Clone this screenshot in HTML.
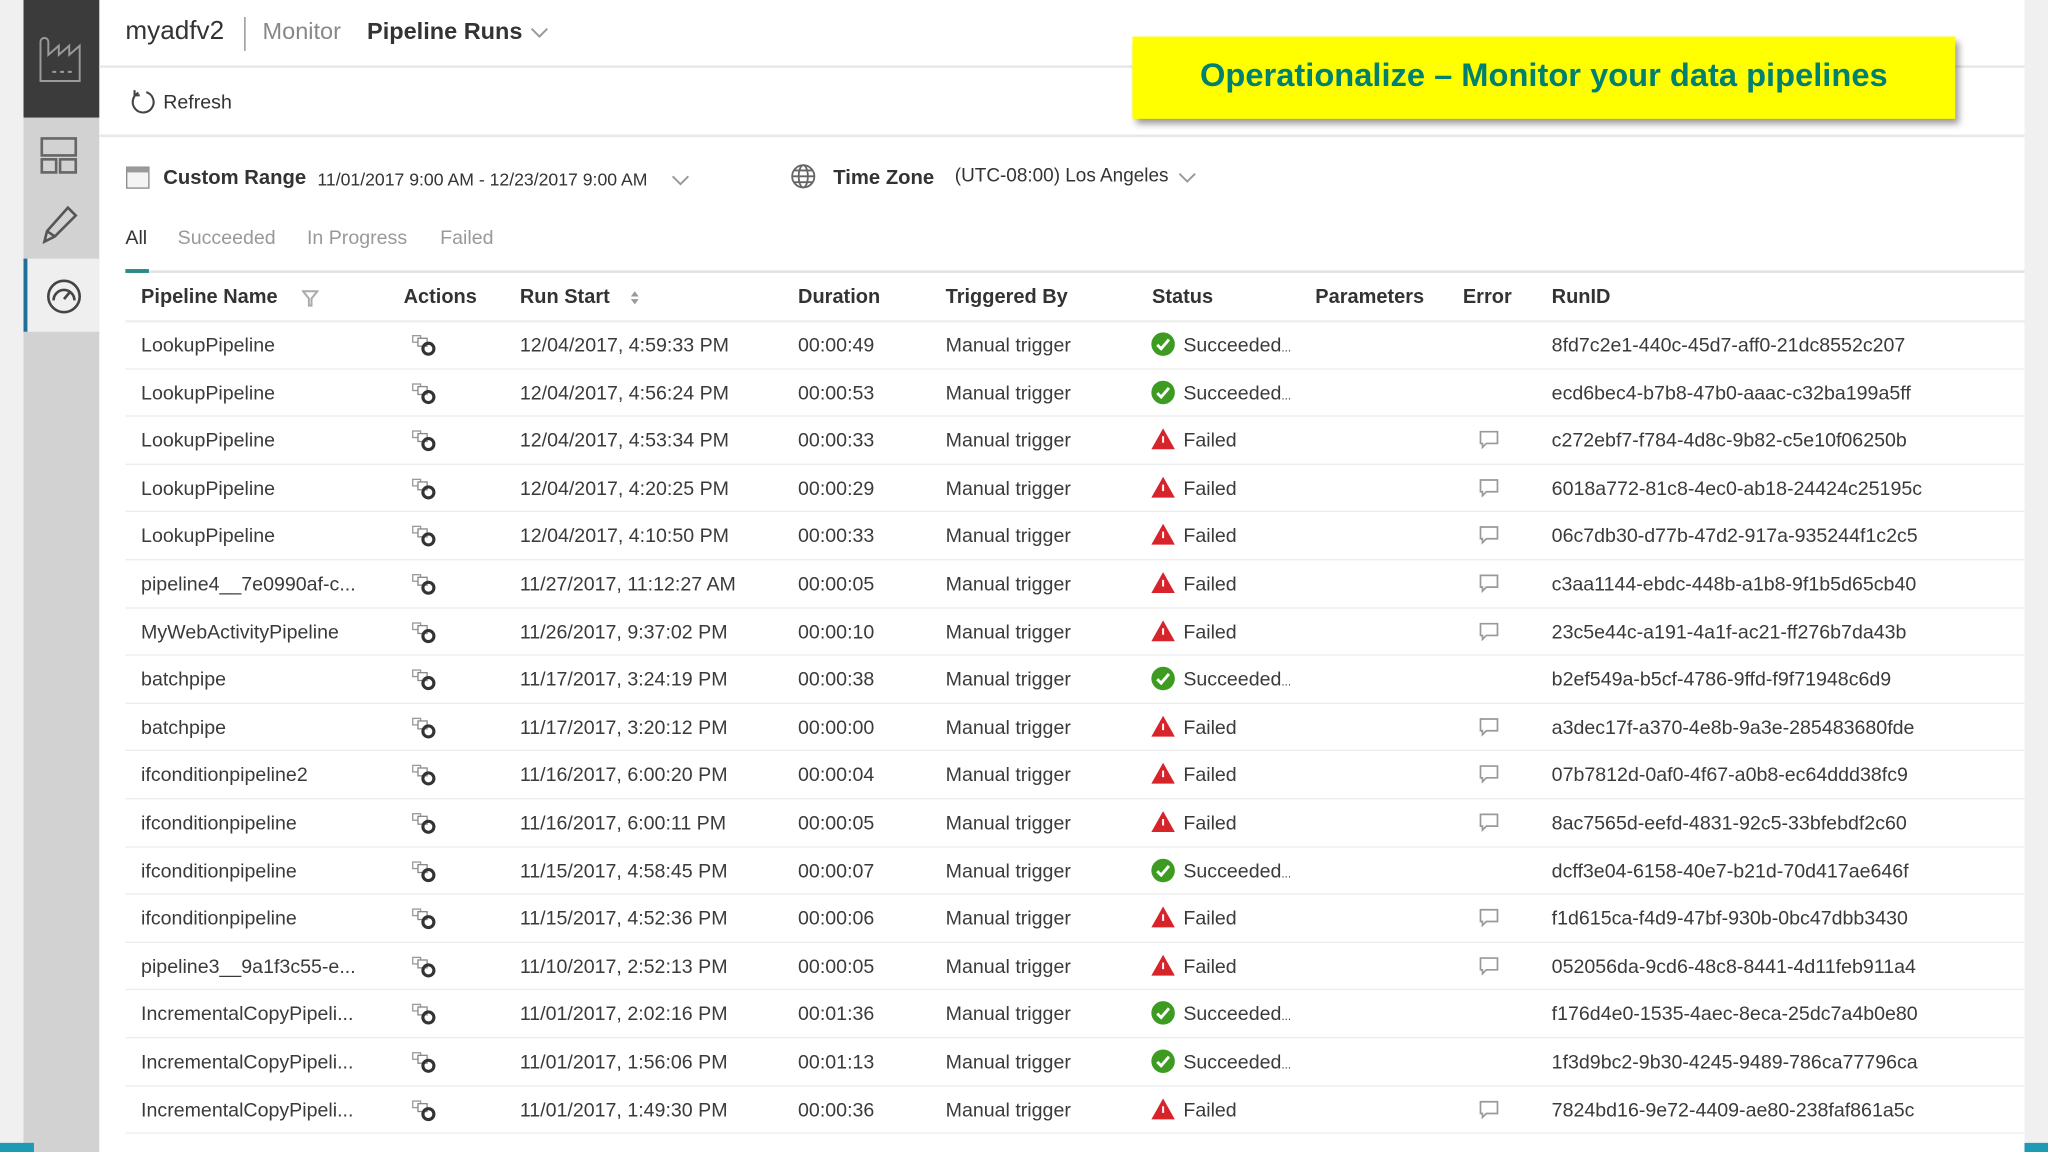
<!DOCTYPE html>
<html><head><meta charset="utf-8"><style>
*{margin:0;padding:0;box-sizing:border-box}
html,body{width:2048px;height:1152px;overflow:hidden;background:#fff}
#w{position:absolute;left:0;top:0;width:1568px;height:882px;transform:scale(1.306122);transform-origin:0 0;font-family:"Liberation Sans",sans-serif;color:#333;background:#fff}
.a{position:absolute;white-space:nowrap}
.row{position:absolute;left:96px;width:1454px;height:36.6px;border-bottom:1px solid #ececec}
.c{position:absolute;top:1px;line-height:36px;font-size:15px;color:#3a3a3a}
.hd{font-size:15.3px;font-weight:bold;color:#333}
</style></head><body><div id="w">
<div class="a" style="left:0;top:0;width:18px;height:882px;background:#f0f0f0"></div>
<div class="a" style="left:1550px;top:0;width:18px;height:882px;background:#f0f0f0"></div>
<div class="a" style="left:18px;top:0;width:58px;height:882px;background:#d2d2d2"></div>
<div class="a" style="left:18px;top:0;width:58px;height:90px;background:#3b3b3b"></div>
<div class="a" style="left:18px;top:198px;width:58px;height:56px;background:#efefef;border-left:3px solid #1f6f9a"></div>
<div class="a" style="left:0;top:875px;width:26px;height:7px;background:#1e9bb3"></div>
<div class="a" style="left:1550px;top:875px;width:18px;height:7px;background:#1e9bb3"></div>
<svg class="a" style="left:28px;top:26px" width="38" height="38" viewBox="0 0 38 38" fill="none" stroke="#9a9a9a" stroke-width="1.5"><path d="M3 36V6a3 3 0 0 1 6 0v10l8-7v7l8-7v7l8-7v27z"/><path d="M12 29h3M18 29h3M24 29h3"/></svg>
<svg class="a" style="left:30px;top:104px" width="30" height="30" viewBox="0 0 30 30" fill="none" stroke="#666" stroke-width="2"><rect x="2" y="2" width="26" height="13"/><rect x="2" y="18" width="11" height="10"/><rect x="16" y="18" width="12" height="10"/></svg>
<svg class="a" style="left:30px;top:155px" width="30" height="32" viewBox="0 0 30 32" fill="none" stroke="#555" stroke-width="2"><path d="M4 30l2-8L22 4l6 6L12 26z"/><path d="M6 22l6 4"/></svg>
<svg class="a" style="left:34px;top:212px" width="30" height="30" viewBox="0 0 30 30" fill="none" stroke="#444" stroke-width="2"><circle cx="15" cy="15" r="12"/><path d="M7 18a8 8 0 1 1 16 0"/><path d="M15 17l5-6"/></svg>
<div class="a" style="left:96px;top:13px;font-size:20px;color:#333">myadfv2</div>
<div class="a" style="left:187px;top:13px;width:1px;height:26px;background:#888"></div>
<div class="a" style="left:201px;top:14px;font-size:18px;color:#888">Monitor</div>
<div class="a" style="left:281px;top:14px;font-size:18px;color:#333;font-weight:bold">Pipeline Runs</div>
<svg class="a" style="left:406px;top:20px" width="14" height="10"><path d="M1 2l6 6 6-6" fill="none" stroke="#999" stroke-width="1.5"/></svg>
<div class="a" style="left:76px;top:50px;width:1474px;height:2px;background:#e8e8e8"></div>
<svg class="a" style="left:100px;top:68px" width="20" height="20" viewBox="0 0 20 20" fill="none" stroke="#444" stroke-width="1.6"><path d="M6 3A8 8 0 1 0 12 2.5"/><path d="M3 1v4h4"/></svg>
<div class="a" style="left:125px;top:70px;font-size:15px;color:#333">Refresh</div>
<div class="a" style="left:76px;top:103px;width:1474px;height:2px;background:#e8e8e8"></div>
<div class="a" style="left:867px;top:28px;width:630px;height:63px;background:#ffff00;box-shadow:3px 4px 5px rgba(0,0,0,.4);text-align:center;line-height:60px;font-size:25px;font-weight:bold;color:#00806f">Operationalize – Monitor your data pipelines</div>
<svg class="a" style="left:96px;top:127px" width="19" height="18"><rect x="1" y="1" width="17" height="16" fill="#f4f4f4" stroke="#888"/><rect x="1" y="1" width="17" height="4" fill="#999"/></svg>
<div class="a" style="left:125px;top:128px;font-size:15.5px;font-weight:bold;color:#333">Custom Range</div>
<div class="a" style="left:243px;top:130px;font-size:13.5px;color:#333">11/01/2017 9:00 AM - 12/23/2017 9:00 AM</div>
<svg class="a" style="left:514px;top:133px" width="14" height="10"><path d="M1 2l6 6 6-6" fill="none" stroke="#999" stroke-width="1.5"/></svg>
<svg class="a" style="left:605px;top:125px" width="20" height="20" viewBox="0 0 20 20" fill="none" stroke="#666" stroke-width="1.4"><circle cx="10" cy="10" r="8.5"/><ellipse cx="10" cy="10" rx="3.5" ry="8.5"/><path d="M1.5 10h17M3 5.5h14M3 14.5h14"/></svg>
<div class="a" style="left:638px;top:128px;font-size:15.5px;font-weight:bold;color:#333">Time Zone</div>
<div class="a" style="left:731px;top:127px;font-size:14.5px;color:#333">(UTC-08:00) Los Angeles</div>
<svg class="a" style="left:902px;top:131px" width="14" height="10"><path d="M1 2l6 6 6-6" fill="none" stroke="#999" stroke-width="1.5"/></svg>
<div class="a" style="left:96px;top:174px;font-size:15px;color:#333">All</div>
<div class="a" style="left:136px;top:174px;font-size:15px;color:#999">Succeeded</div>
<div class="a" style="left:235px;top:174px;font-size:15px;color:#999">In Progress</div>
<div class="a" style="left:337px;top:174px;font-size:15px;color:#999">Failed</div>
<div class="a" style="left:96px;top:207px;width:1454px;height:2px;background:#e3e3e3"></div>
<div class="a" style="left:96px;top:206px;width:18px;height:3px;background:#2a8a8a"></div>
<div class="row" style="top:209px;height:38px;background:#fff;border-bottom:2px solid #f0f0f0">
<div class="c hd" style="left:12px;line-height:36px">Pipeline Name</div>
<svg class="a" style="left:135px;top:13px" width="13" height="13"><path d="M1 1h11L7.5 6.5V12H5.5V6.5z" fill="none" stroke="#aaa" stroke-width="1.5"/></svg>
<div class="c hd" style="left:213px;line-height:36px">Actions</div>
<div class="c hd" style="left:302px;line-height:36px">Run Start</div>
<svg class="a" style="left:387px;top:13px" width="6" height="12"><path d="M0 5l3-4 3 4zM0 7l3 4 3-4z" fill="#999"/></svg>
<div class="c hd" style="left:515px;line-height:36px">Duration</div>
<div class="c hd" style="left:628px;line-height:36px">Triggered By</div>
<div class="c hd" style="left:786px;line-height:36px">Status</div>
<div class="c hd" style="left:911px;line-height:36px">Parameters</div>
<div class="c hd" style="left:1024px;line-height:36px">Error</div>
<div class="c hd" style="left:1092px;line-height:36px">RunID</div>
</div>
<div id="rows"></div>
<script>
var d=[
["LookupPipeline","12/04/2017, 4:59:33 PM","00:00:49",1,"8fd7c2e1-440c-45d7-aff0-21dc8552c207"],
["LookupPipeline","12/04/2017, 4:56:24 PM","00:00:53",1,"ecd6bec4-b7b8-47b0-aaac-c32ba199a5ff"],
["LookupPipeline","12/04/2017, 4:53:34 PM","00:00:33",0,"c272ebf7-f784-4d8c-9b82-c5e10f06250b"],
["LookupPipeline","12/04/2017, 4:20:25 PM","00:00:29",0,"6018a772-81c8-4ec0-ab18-24424c25195c"],
["LookupPipeline","12/04/2017, 4:10:50 PM","00:00:33",0,"06c7db30-d77b-47d2-917a-935244f1c2c5"],
["pipeline4__7e0990af-c...","11/27/2017, 11:12:27 AM","00:00:05",0,"c3aa1144-ebdc-448b-a1b8-9f1b5d65cb40"],
["MyWebActivityPipeline","11/26/2017, 9:37:02 PM","00:00:10",0,"23c5e44c-a191-4a1f-ac21-ff276b7da43b"],
["batchpipe","11/17/2017, 3:24:19 PM","00:00:38",1,"b2ef549a-b5cf-4786-9ffd-f9f71948c6d9"],
["batchpipe","11/17/2017, 3:20:12 PM","00:00:00",0,"a3dec17f-a370-4e8b-9a3e-285483680fde"],
["ifconditionpipeline2","11/16/2017, 6:00:20 PM","00:00:04",0,"07b7812d-0af0-4f67-a0b8-ec64ddd38fc9"],
["ifconditionpipeline","11/16/2017, 6:00:11 PM","00:00:05",0,"8ac7565d-eefd-4831-92c5-33bfebdf2c60"],
["ifconditionpipeline","11/15/2017, 4:58:45 PM","00:00:07",1,"dcff3e04-6158-40e7-b21d-70d417ae646f"],
["ifconditionpipeline","11/15/2017, 4:52:36 PM","00:00:06",0,"f1d615ca-f4d9-47bf-930b-0bc47dbb3430"],
["pipeline3__9a1f3c55-e...","11/10/2017, 2:52:13 PM","00:00:05",0,"052056da-9cd6-48c8-8441-4d11feb911a4"],
["IncrementalCopyPipeli...","11/01/2017, 2:02:16 PM","00:01:36",1,"f176d4e0-1535-4aec-8eca-25dc7a4b0e80"],
["IncrementalCopyPipeli...","11/01/2017, 1:56:06 PM","00:01:13",1,"1f3d9bc2-9b30-4245-9489-786ca77796ca"],
["IncrementalCopyPipeli...","11/01/2017, 1:49:30 PM","00:00:36",0,"7824bd16-9e72-4409-ae80-238faf861a5c"]];
var act='<svg class="a" style="left:219px;top:10px" width="20" height="17"><rect x="1" y="1" width="6" height="5" fill="none" stroke="#999"/><rect x="5" y="3" width="7" height="6" fill="#fff" stroke="#888"/><circle cx="13" cy="11" r="4.2" fill="none" stroke="#333" stroke-width="2.4"/></svg>';
var ok='<svg class="a" style="left:785px;top:8px" width="19" height="19"><circle cx="9.5" cy="9.5" r="9" fill="#3d9b22"/><path d="M5 10l3 3 6-7" fill="none" stroke="#fff" stroke-width="2.2"/></svg>';
var bad='<svg class="a" style="left:785px;top:8px" width="19" height="18"><path d="M9.5 1L18.5 17H.5z" fill="#d7242b"/><path d="M9.5 7v5" stroke="#fff" stroke-width="1.5"/></svg>';
var cm='<svg class="a" style="left:1036px;top:10px" width="16" height="15"><path d="M1.5 1.5h13v9H6l-3 3v-3H1.5z" fill="none" stroke="#999" stroke-width="1.3"/></svg>';
var h='';
for(var i=0;i<d.length;i++){var r=d[i];
h+='<div class="row" style="top:'+(246+i*36.6)+'px"><div class="c" style="left:12px">'+r[0]+'</div>'+act+
'<div class="c" style="left:302px">'+r[1]+'</div><div class="c" style="left:515px">'+r[2]+'</div><div class="c" style="left:628px">Manual trigger</div>'+
(r[3]?ok+'<div class="c" style="left:810px">Succeeded<span style="font-size:9px">...</span></div>':bad+'<div class="c" style="left:810px">Failed</div>'+cm)+
'<div class="c" style="left:1092px">'+r[4]+'</div></div>';}
document.getElementById('rows').innerHTML=h;
</script>
</div></body></html>
